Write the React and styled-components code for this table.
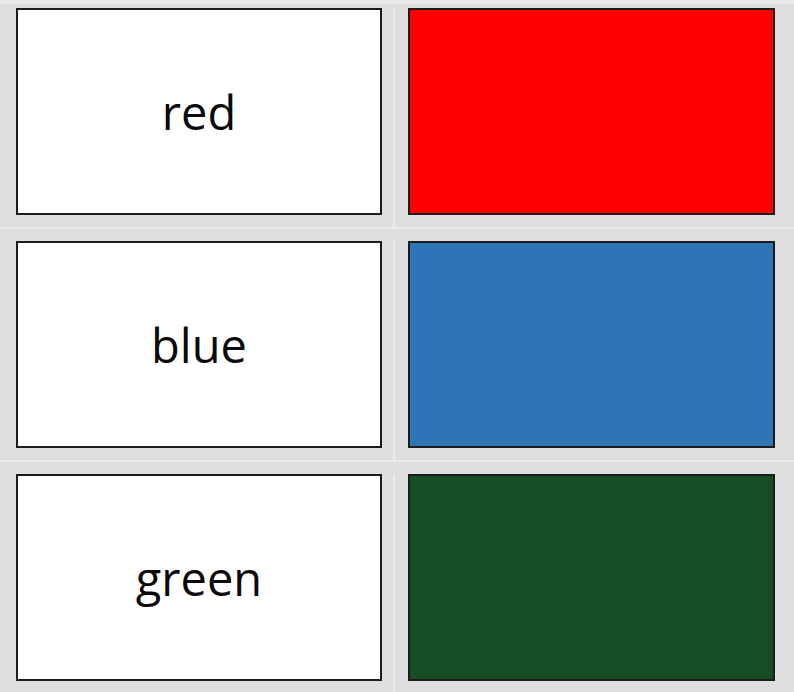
import styled, { createGlobalStyle } from "styled-components";

const rows = [
  { word: "red", color: "#ff0000" },
  { word: "blue", color: "#2e75b6" },
  { word: "green", color: "#174d24" },
];

const App = () => {
  return (
    <>
      <GlobalStyle />
      <Sheet>
        {rows.map((row) => (
          <Row key={row.word}>
            <Cell $side="left">
              <Card>
                <Word>{row.word}</Word>
              </Card>
            </Cell>
            <Cell $side="right">
              <Card $fill={row.color} />
            </Cell>
          </Row>
        ))}
      </Sheet>
    </>
  );
};
export default App;

/****************** styled component ***************/

const GlobalStyle = createGlobalStyle`
  html, body {
    margin: 0;
    padding: 0;
    background: #dfdfdf;
  }
  body {
    font-family: "Open Sans", "Noto Sans", "Liberation Sans", sans-serif;
  }
`;

const Sheet = styled.div`
  width: 794px;
  height: 692px;
  background: #dfdfdf;
  border-top: 4px solid #e9e9e9;
  box-sizing: border-box;
  overflow: hidden;
`;

const Row = styled.div`
  display: grid;
  grid-template-columns: 395px 1fr;
  padding-top: 12px;
  border-bottom: 2px solid #ebebeb;

  &:first-child {
    padding-top: 4px;
  }

  &:last-child {
    border-bottom: none;
  }
`;

const Cell = styled.div`
  padding: ${(p) => (p.$side === "left" ? "0 11px 12px 16px" : "0 19px 12px 13px")};
  border-right: ${(p) => (p.$side === "left" ? "2px solid #ebebeb" : "none")};
`;

const Card = styled.div`
  height: 207px;
  box-sizing: border-box;
  border: 2px solid #1c1c1c;
  background: ${(p) => p.$fill || "#ffffff"};
  display: flex;
  align-items: center;
  justify-content: center;
`;

const Word = styled.span`
  font-size: 47px;
  color: #0a0a0a;
  line-height: 1;
  padding-top: 1px;
`;
